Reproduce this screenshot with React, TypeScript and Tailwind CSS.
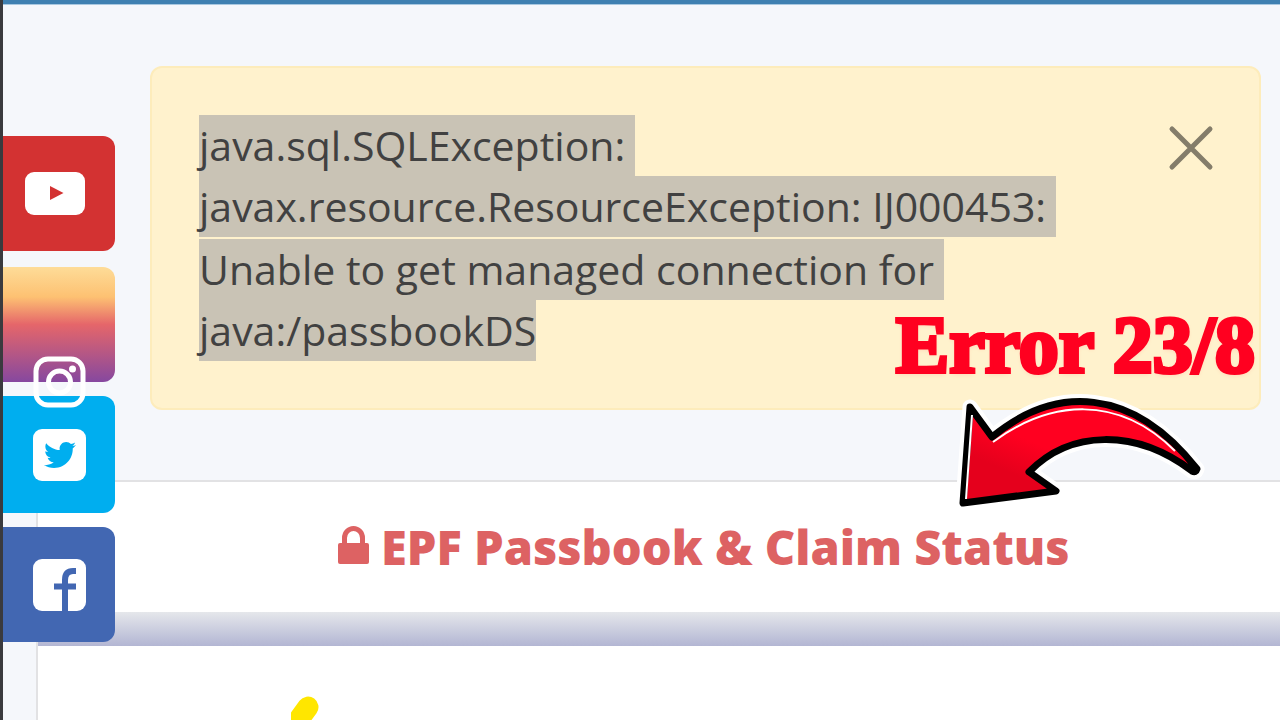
import { FaTwitter } from "react-icons/fa";

const socialLinks = [
  {
    name: "YouTube",
    href: "#youtube",
    className: "mb-4 h-[115px] items-center bg-[#d33232] pl-[22px]",
    icon: (
      <svg viewBox="0 0 60 43" className="h-[43px] w-[60px]" aria-hidden="true">
        <rect width="60" height="43" rx="9" fill="#fff" />
        <path d="M25 14 L38.500 21 L25 28 Z" fill="#d33232" />
      </svg>
    ),
  },
  {
    name: "Instagram",
    href: "#instagram",
    className:
      "mb-3.5 h-[115px] items-start bg-[linear-gradient(#fedc98,#fdc172_26%,#e5666a_50%,#86489f)] pt-[89px] pl-[30px]",
    icon: (
      <svg
        viewBox="0 0 53 52"
        className="z-10 h-[52px] w-[53px] shrink-0"
        fill="none"
        stroke="#fff"
        aria-hidden="true"
      >
        <rect x="3" y="3" width="47" height="46" rx="12" strokeWidth="5" />
        <circle cx="26.5" cy="26" r="11" strokeWidth="5" />
        <circle cx="39.5" cy="13" r="3.5" fill="#fff" stroke="none" />
      </svg>
    ),
  },
  {
    name: "Twitter",
    href: "#twitter",
    className: "mb-3.5 h-[117px] items-center bg-[#00aeef] pl-[30px]",
    icon: (
      <span className="flex h-[52px] w-[53px] items-center justify-center rounded-[9px] bg-white">
        <FaTwitter className="size-8 text-[#00aeef]" aria-hidden="true" />
      </span>
    ),
  },
  {
    name: "Facebook",
    href: "#facebook",
    className: "h-[115px] items-center bg-[#4267b2] pl-[30px]",
    icon: (
      <svg viewBox="0 0 53 52" className="h-[52px] w-[53px]" aria-hidden="true">
        <rect width="53" height="52" rx="9" fill="#fff" />
        <path
          d="M32 52 V21 Q32 12 40 12 H43 M21 27.500 H43"
          fill="none"
          stroke="#4267b2"
          strokeWidth="6"
        />
      </svg>
    ),
  },
];

const SocialBar = () => (
  <nav className="absolute top-[136px] left-0 flex w-28 flex-col" aria-label="Social media">
    {socialLinks.map((link) => (
      <a
        key={link.name}
        href={link.href}
        aria-label={link.name}
        className={`flex rounded-r-xl ${link.className}`}
      >
        {link.icon}
      </a>
    ))}
  </nav>
);

const Alert = () => (
  <div
    role="alert"
    className="mt-[61px] mr-[19px] ml-[147px] flex items-start justify-between rounded-xl border-2 border-[#fdecbb] bg-[#fff2cd] px-[47px] py-[47px]"
  >
    {/* Selected message, one highlight per line */}
    <div className="flex flex-col gap-0.5 text-[41px] leading-[61px] text-[#414141]">
      <p>
        <span className="block w-fit bg-[#c9c3b5] pr-2.5">java.sql.SQLException:</span>
        <span className="block w-fit bg-[#c9c3b5] pr-2.5">
          javax.resource.ResourceException: IJ000453:
        </span>
      </p>
      <p>
        <span className="block w-fit bg-[#c9c3b5] pr-2.5">
          Unable to get managed connection for
        </span>
        <span className="block w-fit bg-[#c9c3b5]">java:/passbookDS</span>
      </p>
    </div>
    <button type="button" aria-label="Close" className="mt-2.5 -mr-0.5 shrink-0 text-[#847d6a]">
      <svg viewBox="0 0 46 46" className="size-[46px]" aria-hidden="true">
        <path d="M4 4 L42 42 M42 4 L4 42" stroke="currentColor" strokeWidth="5" strokeLinecap="round" />
      </svg>
    </button>
  </div>
);

const LockIcon = () => (
  <svg viewBox="0 0 31 38" className="mb-1 h-[38px] w-[31px]" aria-hidden="true">
    <path d="M6.500 20 V12 A9 9.500 0 0 1 24.500 12 V20" fill="none" stroke="currentColor" strokeWidth="5" />
    <rect y="17" width="31" height="21" rx="2" fill="currentColor" />
  </svg>
);

const arrowPath =
  "M970 407 L992 437 C1055 385 1132 386 1197 469 Q1196 473 1192 471 C1135 428 1070 430 1029 472 L1056 491 L963 503 Z";

const Arrow = () => (
  <svg
    viewBox="950 390 260 125"
    className="absolute top-[390px] right-[70px] h-[125px] w-[260px]"
    strokeLinejoin="round"
    aria-hidden="true"
  >
    <defs>
      <linearGradient id="arrowFill" x1="0" y1="1" x2="1" y2="0">
        <stop offset="0.25" stopColor="#e5001c" />
        <stop offset="0.45" stopColor="#ff0020" />
      </linearGradient>
    </defs>
    <path d={arrowPath} fill="#fff" stroke="#fff" strokeWidth="15" />
    <path d={arrowPath} fill="url(#arrowFill)" stroke="#000" strokeWidth="7" />
    <path
      d="M966 499 L972 415 M993 442 C1050 400 1118 394 1175 451"
      fill="none"
      stroke="#fff"
      strokeWidth="2"
    />
  </svg>
);

const App = () => {
  return (
    <div className="relative flex min-h-screen flex-col overflow-hidden border-l-3 border-[#3a3a3e] bg-[#f5f7fb] font-['Open_Sans',sans-serif]">
      <div className="h-[5px] border-b border-[#a9c8e0] bg-[#3f80b1]" />
      <Alert />
      <main className="mt-[70px] ml-[33px] flex-1 border-t-2 border-l-2 border-[#e2e2e4] bg-white">
        <h1 className="flex h-[130px] items-center gap-3 pl-[300px] text-[47px] font-extrabold whitespace-nowrap text-[#dd6263]">
          <LockIcon />
          EPF Passbook &amp; Claim Status
        </h1>
        <div className="h-[34px] bg-linear-to-b from-[#e5e7eb] to-[#b3b6d3]" />
        <div className="pt-[50px] pl-[253px]">
          <svg viewBox="0 0 28 24" className="h-6 w-7" aria-hidden="true">
            <path d="M9 22 L17 11" stroke="#ffe600" strokeWidth="21" strokeLinecap="round" />
          </svg>
        </div>
      </main>
      <SocialBar />
      <p className="absolute top-[297px] right-[25px] font-['Liberation_Serif',serif] text-[80px] leading-[96px] font-bold whitespace-nowrap text-[#ff0020] [-webkit-text-stroke:4px_#ff0020] text-shadow-[0_2px_5px_rgb(255_0_32/0.15)]">
        Error 23/8
      </p>
      <Arrow />
    </div>
  );
};

export default App;
